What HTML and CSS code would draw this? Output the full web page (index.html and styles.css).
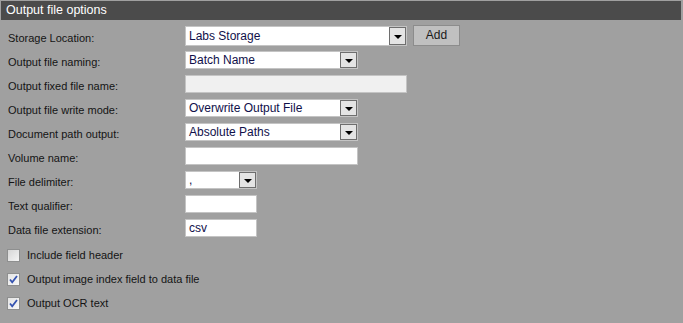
FILE: index.html
```html
<!DOCTYPE html>
<html>
<head>
<meta charset="utf-8">
<link rel="stylesheet" href="styles.css">
</head>
<body>
<div class="panel">
  <div class="header">Output file options</div>
  <div class="form">
    <div class="row first">
      <div class="label">Storage Location:</div>
      <div class="ctl">
        <div class="combo tall w222"><span class="val">Labs Storage</span><span class="btn"><i></i></span></div>
        <div class="add">Add</div>
      </div>
    </div>
    <div class="row">
      <div class="label">Output file naming:</div>
      <div class="ctl"><div class="combo w173"><span class="val">Batch Name</span><span class="btn"><i></i></span></div></div>
    </div>
    <div class="row">
      <div class="label">Output fixed file name:</div>
      <div class="ctl"><div class="box w222 disabled"></div></div>
    </div>
    <div class="row">
      <div class="label">Output file write mode:</div>
      <div class="ctl"><div class="combo w173"><span class="val">Overwrite Output File</span><span class="btn"><i></i></span></div></div>
    </div>
    <div class="row">
      <div class="label">Document path output:</div>
      <div class="ctl"><div class="combo w173"><span class="val">Absolute Paths</span><span class="btn"><i></i></span></div></div>
    </div>
    <div class="row">
      <div class="label">Volume name:</div>
      <div class="ctl"><div class="box w173"></div></div>
    </div>
    <div class="row">
      <div class="label">File delimiter:</div>
      <div class="ctl"><div class="combo w72"><span class="val">,</span><span class="btn"><i></i></span></div></div>
    </div>
    <div class="row">
      <div class="label">Text qualifier:</div>
      <div class="ctl"><div class="box w72"></div></div>
    </div>
    <div class="row">
      <div class="label">Data file extension:</div>
      <div class="ctl"><div class="box w72"><span class="val">csv</span></div></div>
    </div>
  </div>
  <div class="checks">
    <div class="check"><span class="cb"></span><span>Include field header</span></div>
    <div class="check"><span class="cb on"><svg width="11" height="11" viewBox="0 0 11 11"><path d="M2 5.5 L4.2 8.2 L9 2" fill="none" stroke="#3553b0" stroke-width="1.8"/></svg></span><span>Output image index field to data file</span></div>
    <div class="check"><span class="cb on"><svg width="11" height="11" viewBox="0 0 11 11"><path d="M2 5.5 L4.2 8.2 L9 2" fill="none" stroke="#3553b0" stroke-width="1.8"/></svg></span><span>Output OCR text</span></div>
  </div>
</div>
</body>
</html>
```

FILE: styles.css
```css
html, body {
  margin: 0;
  padding: 0;
  background: #a0a0a0;
}
body {
  width: 683px;
  height: 323px;
  overflow: hidden;
  font-family: "Liberation Sans", Arial, sans-serif;
  font-size: 11px;
  color: #141414;
}
.panel {
  padding-top: 1px;
}
.header {
  margin-left: 1px;
  width: 680px;
  height: 19px;
  background: #4b4b4b;
  color: #ffffff;
  font-size: 12.5px;
  line-height: 19px;
  padding-left: 5px;
  box-sizing: border-box;
}
.form {
  padding-top: 6px;
  display: flex;
  flex-direction: column;
}
.row {
  display: grid;
  grid-template-columns: 177px auto;
  height: 24px;
  align-items: start;
  padding-left: 8px;
}
.row.first {
  height: 25px;
}
.label {
  line-height: 18px;
  padding-top: 2px;
}
.row.first .label {
  padding-top: 3px;
}
.ctl {
  display: flex;
  align-items: flex-start;
}
.combo, .box {
  display: flex;
  height: 18px;
  background: #ffffff;
  border: 1px solid #c4c4c4;
  box-sizing: border-box;
  position: relative;
}
.combo.tall {
  height: 20px;
}
.box.disabled {
  background: #f0f0f0;
}
.w222 { width: 222px; }
.w173 { width: 173px; }
.w72 { width: 72px; }
.val {
  flex: 1;
  padding-left: 3px;
  line-height: 16px;
  font-size: 12px;
  color: #10104a;
  white-space: nowrap;
}
.combo.tall .val {
  line-height: 18px;
}
.btn {
  width: 17px;
  height: 100%;
  box-sizing: border-box;
  border: 1px solid #6e6e6e;
  background: #e4e4e4;
  display: flex;
  align-items: center;
  justify-content: center;
}
.btn i {
  width: 0;
  height: 0;
  border-left: 4px solid transparent;
  border-right: 4px solid transparent;
  border-top: 4px solid #000;
  margin-top: 1px;
}
.add {
  margin-left: 6px;
  width: 47px;
  height: 21px;
  margin-top: -1px;
  box-sizing: border-box;
  border: 1px solid #8c8c8c;
  background: #c0c0c0;
  text-align: center;
  line-height: 19px;
  font-size: 12px;
  color: #1a1a1a;
}
.checks {
  padding-top: 0;
  padding-left: 7px;
  display: flex;
  flex-direction: column;
}
.check {
  display: flex;
  align-items: center;
  height: 24px;
  gap: 7px;
}
.cb {
  width: 13px;
  height: 13px;
  box-sizing: border-box;
  border: 1px solid #8e8f8f;
  background: linear-gradient(135deg, #d6d6d6, #f4f4f4);
  display: flex;
  align-items: center;
  justify-content: center;
}
.cb.on {
  background: linear-gradient(135deg, #e4e4e4, #f8f8f8);
}
```
